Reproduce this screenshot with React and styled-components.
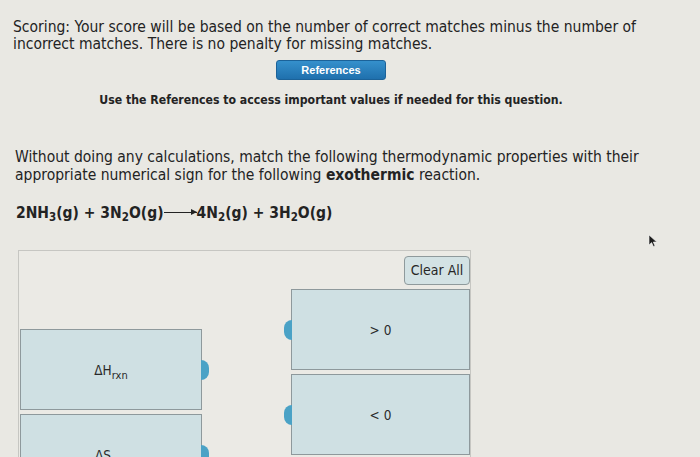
import React from 'react'
import styled, { createGlobalStyle } from "styled-components";

const GlobalStyle = createGlobalStyle`
html, body {
    margin: 0;
    padding: 0;
    background: #e9e8e3;
}
body {
    font-family: "DejaVu Sans Condensed", "DejaVu Sans", Verdana, sans-serif;
    color: #232323;
    overflow: hidden;
}
`;

const App = () => {
    return (
        <Page>
        <GlobalStyle />
        <Scoring>
            Scoring: Your score will be based on the number of correct matches minus the number of
            incorrect matches. There is no penalty for missing matches.
        </Scoring>
        <RefBlock>
            <RefButton>References</RefButton>
            <RefNote>Use the References to access important values if needed for this question.</RefNote>
        </RefBlock>
        <Question>
            Without doing any calculations, match the following thermodynamic properties with their
            appropriate numerical sign for the following <b>exothermic</b> reaction.
        </Question>
        <Equation>
            2NH<sub>3</sub>(g) + 3N<sub>2</sub>O(g)<Arrow />4N<sub>2</sub>(g) + 3H<sub>2</sub>O(g)
        </Equation>
        <Panel>
            <PanelTop>
                <ClearButton>Clear All</ClearButton>
            </PanelTop>
            <Columns>
                <LeftColumn>
                    <Tile side="right"><span>&Delta;H<sub>rxn</sub></span></Tile>
                    <Tile side="right"><span>&Delta;S<sub>rxn</sub></span></Tile>
                </LeftColumn>
                <RightColumn>
                    <Tile side="left" wide><span>&gt; 0</span></Tile>
                    <Tile side="left" wide><span>&lt; 0</span></Tile>
                </RightColumn>
            </Columns>
        </Panel>
        <Cursor viewBox="0 0 10 14">
            <path d="M1 1 L1 11 L3.6 8.6 L5.4 12.6 L7 11.9 L5.3 8 L8.8 8 Z" fill="#1d1d1d" stroke="#f4f4f4" strokeWidth="0.6" />
        </Cursor>
        </Page>
    )
}

const Page = styled.div`
position: relative;
width: 700px;
height: 457px;
overflow: hidden;
padding: 19px 0 0 13px;
box-sizing: border-box;
`;

const Scoring = styled.p`
margin: 0;
width: 640px;
font-size: 15.5px;
line-height: 17px;
`;

const RefBlock = styled.div`
width: 636px;
display: flex;
flex-direction: column;
align-items: center;
margin-top: 7px;
`;

const RefButton = styled.div`
width: 110px;
height: 20px;
border-radius: 3px;
background: linear-gradient(#3590cc, #1f70ad);
border: 1px solid #1b6299;
box-sizing: border-box;
color: #fff;
font-family: "Liberation Sans", Arial, sans-serif;
font-weight: 700;
font-size: 11px;
line-height: 18px;
text-align: center;
`;

const RefNote = styled.div`
margin-top: 13px;
font-weight: 700;
font-size: 12.2px;
line-height: 15px;
`;

const Question = styled.p`
margin: 40px 0 0 2px;
width: 640px;
font-size: 15.5px;
line-height: 18px;

b { font-weight: 700; }
`;

const Equation = styled.div`
margin: 20px 0 0 3px;
font-weight: 700;
font-size: 15.5px;
line-height: 18px;
white-space: nowrap;

sub {
    font-size: 11.5px;
    line-height: 0;
    vertical-align: -3px;
}
`;

const Arrow = styled.span`
display: inline-block;
position: relative;
width: 33px;
height: 1px;
background: #232323;
vertical-align: 5px;

&::after {
    content: "";
    position: absolute;
    right: 0;
    top: -3px;
    border-left: 6px solid #232323;
    border-top: 3.5px solid transparent;
    border-bottom: 3.5px solid transparent;
}
`;

const Panel = styled.div`
margin: 28px 0 0 5px;
width: 453px;
height: 240px;
border: 1px solid #c6c6c2;
border-bottom: none;
background: #ebeae5;
box-sizing: border-box;
padding: 5px 0 0 1px;
`;

const PanelTop = styled.div`
display: flex;
justify-content: flex-end;
`;

const ClearButton = styled.div`
width: 66px;
height: 29px;
box-sizing: border-box;
border: 1px solid #8f9a9c;
border-radius: 4px;
background: #d3e2e4;
font-size: 14px;
line-height: 27px;
text-align: center;
color: #262626;
`;

const Columns = styled.div`
display: flex;
justify-content: space-between;
margin-top: 4px;
`;

const LeftColumn = styled.div`
display: flex;
flex-direction: column;
gap: 4px;
padding-top: 40px;
`;

const RightColumn = styled.div`
display: flex;
flex-direction: column;
gap: 4px;
`;

const Tile = styled.div`
position: relative;
width: ${p => p.wide ? 179 : 182}px;
height: 81px;
box-sizing: border-box;
border: 1.5px solid #8e999c;
background: #cfe0e3;
display: flex;
align-items: center;
justify-content: center;
font-size: 13.5px;
color: #2a2a2a;

sub {
    font-size: 11px;
    line-height: 0;
    vertical-align: -4px;
}

&::after {
    content: "";
    position: absolute;
    top: 50%;
    width: 8px;
    height: 20px;
    margin-top: -10px;
    background: #4aa2c6;
    ${p => p.side === "left"
        ? "right: 100%; border-radius: 10px 0 0 10px;"
        : "left: 100%; border-radius: 0 10px 10px 0;"}
}
`;

const Cursor = styled.svg`
position: absolute;
left: 648px;
top: 234px;
width: 10px;
height: 14px;
`;

export default App;
